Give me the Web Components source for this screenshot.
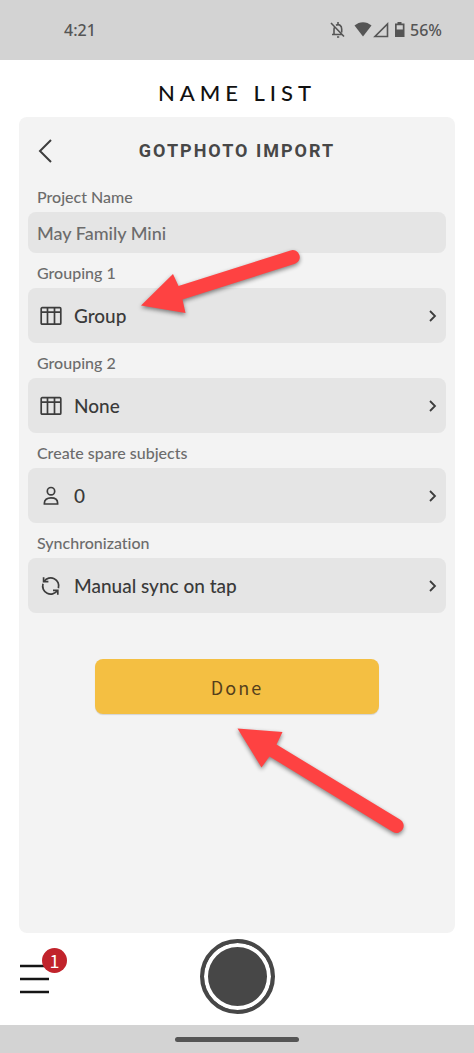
<!DOCTYPE html>
<html lang="en">
<head>
<meta charset="utf-8">
<meta name="viewport" content="width=device-width, initial-scale=1">
<title>Name List</title>
<style>
html, body { margin: 0; }
body { font-family: Lato, "Liberation Sans", sans-serif; font-variant-ligatures: none; background: #fff; color: #3d3d3d; }
</style>
</head>
<body>
<name-list-app></name-list-app>
<script>
const define = (name, html, setup) => customElements.define(name, class extends HTMLElement {
  connectedCallback() {
    if (this.shadowRoot) return;
    const root = this.attachShadow({ mode: "open" });
    const t = document.createElement("template");
    t.innerHTML = html;
    root.append(t.content.cloneNode(true));
    if (setup) setup(this, root);
  }
});

const icons = {
  table: '<rect x="1.2" y="2.700" width="19.6" height="16.500" rx="1"/><path d="M1.2 7.2h19.6M7.5 2.700v16.500M14.5 2.700v16.500"/>',
  person: '<circle cx="11" cy="6.2" r="3.7"/><path d="M4.4 19v-1c0-3.2 2.600-5.1 6.600-5.1s6.600 1.9 6.600 5.1v1z"/>',
  sync: '<path d="M4.200 6.300A8 8 0 0 1 18.400 13.200M17.200 15.700A8 8 0 0 1 3 8.800"/><path d="M3.600 2.200v4.500h4.800M17.800 19.800v-4.500h-4.800"/>',
};

define("status-bar", `
<style>
:host { display: flex; align-items: center; justify-content: space-between; height: 60px; box-sizing: border-box; padding: 0 32px 0 64px; background: #d3d3d3; color: #555; font: 500 16px/20px "Noto Sans", sans-serif; }
.right { display: flex; align-items: center; gap: 4px; }
</style>
<span>4:21</span>
<div class="right">
<svg width="76" height="18" viewBox="0 0 76 18" aria-hidden="true">
<g fill="none" stroke="#555" stroke-width="1.600"><path d="M1 2l13 13.500M2 13.500h10.500M4 13.500V8.500c0-1 .2-2 .8-2.800M6 4.300C9 2.600 11.700 4.700 11.700 8v3.500M8 1v2.500M7 16h2.200"/><path d="M57.500 3v12.500H45z"/></g>
<path fill="#555" d="M24.500 4.500C29.500 0 36.500 0 41.500 4.500L33 15.500z"/>
<path fill="#555" fill-rule="evenodd" d="M67.500 1h4v1.500h3V16H65V2.500h2.500zM66.700 4.200v4.300h6.100V4.200z"/>
</svg>
<span>56%</span>
</div>`);

define("app-title", `
<style>
:host { display: block; padding: 18px 0 9px; }
h1 { margin: 0; font: 500 22px/30px Lato, sans-serif; letter-spacing: 5px; text-align: center; color: #111; }
</style>
<h1><slot></slot></h1>`);

define("card-header", `
<style>
:host { display: grid; grid-template-columns: 52px 1fr 52px; align-items: center; height: 60px; padding-top: 8px; box-sizing: border-box; }
button { border: 0; background: none; padding: 0; height: 52px; display: grid; place-items: center; }
h2 { margin: 0; text-align: center; font: 700 18px/24px Roboto, sans-serif; letter-spacing: 2px; color: #474747; }
</style>
<button type="button" aria-label="Back"><svg width="16" height="26" viewBox="0 0 16 26" fill="none" stroke="#3d3d3d" stroke-width="2"><path d="M14 2L3 13l11 11"/></svg></button>
<h2><slot></slot></h2>`);

const labelStyle = `
:host { display: block; }
label { display: block; padding: 10px 9px 5px; font-size: 16px; font-weight: 500; line-height: 20px; color: #6c6c6c; }`;

define("text-field", `
<style>${labelStyle}
input { display: block; box-sizing: border-box; width: 100%; height: 41px; border: 0; border-radius: 8px; padding: 0 9px; background: #e5e5e5; color: #6c6c6c; font: 500 18px/24px Lato, sans-serif; }
</style>
<label for="f"></label><input id="f" type="text">`, (el, root) => {
  root.querySelector("label").textContent = el.getAttribute("label");
  root.querySelector("input").value = el.getAttribute("value");
});

define("picker-row", `
<style>${labelStyle}
button { display: flex; align-items: center; gap: 12px; width: 100%; height: 55px; border: 0; border-radius: 8px; padding: 0 8px 0 12px; background: #e5e5e5; color: #3a3a3a; font: 500 19px/24px Lato, sans-serif; text-align: left; }
span { flex: 1; }
svg { fill: none; stroke: #3d3d3d; }
</style>
<label for="b"></label>
<button id="b" type="button"><svg class="icon" width="22" height="22" viewBox="0 0 22 22" stroke-width="1.700"></svg><span><slot></slot></span><svg width="10" height="14" viewBox="0 0 10 14" stroke-width="1.800"><path d="M2 2l5 5-5 5"/></svg></button>`, (el, root) => {
  root.querySelector("label").textContent = el.getAttribute("label");
  root.querySelector(".icon").innerHTML = icons[el.getAttribute("icon")];
});

define("primary-button", `
<style>
:host { display: block; width: 65%; margin: 46px auto 0; }
button { display: block; width: 100%; height: 55px; border: 0; border-radius: 8px; background: #f4bf42; color: #55401c; font: 400 18px/24px "Noto Sans CJK SC", sans-serif; letter-spacing: 2px; box-shadow: 0 1px 1px #0002; }
</style>
<button type="button"><slot></slot></button>`);

define("pointer-arrow", `
<style>
:host { display: block; position: absolute; pointer-events: none; }
svg { display: block; overflow: visible; filter: drop-shadow(0 2px 2px #0007); }
</style>
<svg aria-hidden="true" fill="#fe4242"><path/></svg>`, (el, root) => {
  const svg = root.querySelector("svg");
  svg.setAttribute("width", el.getAttribute("w"));
  svg.setAttribute("height", el.getAttribute("h"));
  root.querySelector("path").setAttribute("d", el.getAttribute("d"));
});

define("import-card", `
<style>
:host { display: block; position: relative; flex: 1; margin: 0 19px; background: #f3f3f3; border-radius: 8px; }
form { margin: 0; padding: 0 9px; }
.to-group { left: 122px; top: 133px; }
.to-done { left: 218px; top: 611px; }
</style>
<card-header>GOTPHOTO IMPORT</card-header>
<form>
<text-field label="Project Name" value="May Family Mini"></text-field>
<picker-row label="Grouping 1" icon="table">Group</picker-row>
<picker-row label="Grouping 2" icon="table">None</picker-row>
<picker-row label="Create spare subjects" icon="person">0</picker-row>
<picker-row label="Synchronization" icon="sync">Manual sync on tap</picker-row>
</form>
<primary-button>Done</primary-button>
<pointer-arrow class="to-group" w="160" h="64" d="M0 55.500L32 24l5.500 12L149.500 .5a7 7 0 0 1 4.500 13.300L41.500 49.500l3 13.500z"></pointer-arrow>
<pointer-arrow class="to-done" w="170" h="106" d="M.5 .5L45.500 4l-6 12.500L163 91.500a7 7 0 0 1-7 12.500L32.500 28.500l-8 11z"></pointer-arrow>`);

define("bottom-bar", `
<style>
:host { display: grid; grid-template-columns: 1fr auto 1fr; height: 92px; align-items: center; padding: 0 20px; box-sizing: border-box; }
button { border: 0; padding: 0; background: none; }
.menu { position: relative; width: 29px; height: 30px; display: block; }
.menu svg { display: block; }
.badge { position: absolute; left: 22px; top: -16px; width: 25px; height: 25px; border-radius: 50%; background: #c1232b; color: #fff; font: 400 18px/25px "Noto Sans CJK SC", sans-serif; text-align: center; }
.shutter { width: 75px; height: 75px; margin-bottom: 5px; border-radius: 50%; border: 4px solid #474747; background: #474747; box-shadow: inset 0 0 0 4px #fff; }
</style>
<button class="menu" type="button" aria-label="Menu"><svg width="29" height="30" viewBox="0 0 29 30" stroke="#151515" stroke-width="2.600"><path d="M0 2h29M0 15h29M0 28h29"/></svg><span class="badge">1</span></button>
<button class="shutter" type="button" aria-label="Take photo"></button>`);

define("home-bar", `
<style>
:host { display: grid; place-items: center; height: 28px; background: #d3d3d3; }
div { width: 124px; height: 5px; border-radius: 3px; background: #555; }
</style>
<div></div>`);

define("name-list-app", `
<style>
:host { display: flex; flex-direction: column; min-height: 100vh; }
</style>
<status-bar></status-bar>
<app-title>NAME LIST</app-title>
<import-card></import-card>
<bottom-bar></bottom-bar>
<home-bar></home-bar>`);
</script>
</body>
</html>
